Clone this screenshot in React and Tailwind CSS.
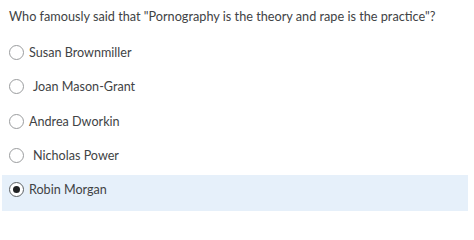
import React from 'react';

const options = [
  { label: 'Susan Brownmiller', pad: false },
  { label: 'Joan Mason-Grant', pad: true },
  { label: 'Andrea Dworkin', pad: false },
  { label: 'Nicholas Power', pad: true },
  { label: 'Robin Morgan', pad: false, checked: true },
];

const Radio = ({ checked }) => (
  <span
    className={`flex h-[15px] w-[15px] shrink-0 items-center justify-center rounded-full border bg-white ${
      checked ? 'border-[#5b5f62]' : 'border-[#9a9c9e]'
    }`}
  >
    {checked && <span className="h-[7px] w-[7px] rounded-full bg-[#202122]" />}
  </span>
);

export default function App() {
  return (
    <div className="h-[213px] w-[474px] overflow-hidden bg-white text-[#414345]" style={{ fontFamily: 'Lato, "Noto Sans", sans-serif' }}>
      <p className="whitespace-nowrap pl-[9px] pt-[6px] text-[12.7px] leading-[20px]">
        Who famously said that "Pornography is the theory and rape is the practice"?
      </p>
      <div className="mt-[9px] flex flex-col">
        {options.map((o) => (
          <div
            key={o.label}
            className={`ml-[2px] mr-[6px] flex h-[34.5px] items-center gap-[5px] pl-[7px] text-[12.6px] ${
              o.checked ? 'mt-[2px] h-[36px] items-start pt-[7px] bg-[#e6f0fa]' : ''
            }`}
          >
            <Radio checked={o.checked} />
            <span className={`leading-[15px] ${o.pad ? 'pl-[4px]' : ''}`}>{o.label}</span>
          </div>
        ))}
      </div>
    </div>
  );
}
